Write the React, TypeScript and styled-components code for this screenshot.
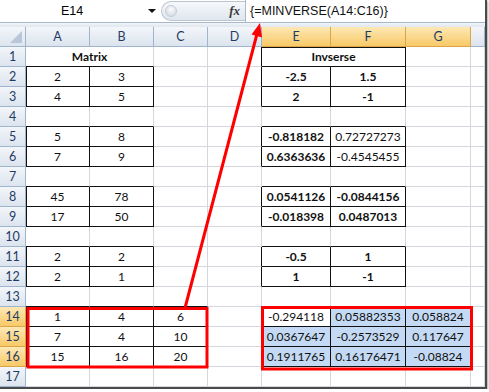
import React from 'react';
import styled, { createGlobalStyle } from 'styled-components';

const Global = createGlobalStyle`
  html, body { margin: 0; padding: 0; background: #fff; }
  body { font-family: Lato, "Liberation Sans", sans-serif; }
  * { box-sizing: border-box; }
`;

const COLS = ['A', 'B', 'C', 'D', 'E', 'F', 'G', 'H'];
const GRID = '#d4d8de';
const BLACK = '#111';

type CellData = { v: string; b?: boolean };

const DATA: Record<string, CellData> = {
  A2: { v: '2' }, B2: { v: '3' }, A3: { v: '4' }, B3: { v: '5' },
  A5: { v: '5' }, B5: { v: '8' }, A6: { v: '7' }, B6: { v: '9' },
  A8: { v: '45' }, B8: { v: '78' }, A9: { v: '17' }, B9: { v: '50' },
  A11: { v: '2' }, B11: { v: '2' }, A12: { v: '2' }, B12: { v: '1' },
  A14: { v: '1' }, B14: { v: '4' }, C14: { v: '6' },
  A15: { v: '7' }, B15: { v: '4' }, C15: { v: '10' },
  A16: { v: '15' }, B16: { v: '16' }, C16: { v: '20' },
  E2: { v: '-2.5', b: true }, F2: { v: '1.5', b: true },
  E3: { v: '2', b: true }, F3: { v: '-1', b: true },
  E5: { v: '-0.818182', b: true }, F5: { v: '0.72727273' },
  E6: { v: '0.6363636', b: true }, F6: { v: '-0.4545455' },
  E8: { v: '0.0541126', b: true }, F8: { v: '-0.0844156', b: true },
  E9: { v: '-0.018398', b: true }, F9: { v: '0.0487013', b: true },
  E11: { v: '-0.5', b: true }, F11: { v: '1', b: true },
  E12: { v: '1', b: true }, F12: { v: '-1', b: true },
  E14: { v: '-0.294118' }, F14: { v: '0.05882353' }, G14: { v: '0.058824' },
  E15: { v: '0.0367647' }, F15: { v: '-0.2573529' }, G15: { v: '0.117647' },
  E16: { v: '0.1911765' }, F16: { v: '0.16176471' }, G16: { v: '-0.08824' },
};

// boxed ranges: [c1, r1, c2, r2] (col index 0 = A)
const BOXES: [number, number, number, number][] = [
  [0, 2, 1, 3], [0, 5, 1, 6], [0, 8, 1, 9], [0, 11, 1, 12], [0, 14, 2, 16],
  [4, 1, 5, 3], [4, 5, 5, 6], [4, 8, 5, 9], [4, 11, 5, 12], [4, 14, 6, 16],
];

const boxed = (c: number, r: number) =>
  BOXES.some(([c1, r1, c2, r2]) => c >= c1 && c <= c2 && r >= r1 && r <= r2);

const inSel = (c: number, r: number) => c >= 4 && c <= 6 && r >= 14 && r <= 16;

const Frame = styled.div`
  position: relative;
  width: 487px;
  height: 389px;
  border-right: 2px solid #4a4a4a;
  border-bottom: 2px solid #4a4a4a;
  box-shadow: 1px 1px 2px rgba(0, 0, 0, 0.35);
  overflow: hidden;
  background: #fff;
`;

const FormulaBar = styled.div`
  display: flex;
  height: 23px;
  border-bottom: 1px solid #a9b8ca;
  background: #fff;
`;

const NameBox = styled.div`
  width: 161px;
  display: flex;
  align-items: center;
`;

const NameText = styled.span`
  flex: 1;
  text-align: center;
  font-family: "Liberation Sans", sans-serif;
  font-size: 12.5px;
  color: #000;
  padding-right: 4px;
`;

const DropArrow = styled.span`
  width: 0;
  height: 0;
  border-left: 4px solid transparent;
  border-right: 4px solid transparent;
  border-top: 4px solid #111;
  margin-right: 5px;
`;

const Pill = styled.div`
  width: 84px;
  margin: 1px 0;
  border: 1px solid #b9c5d3;
  border-right: none;
  border-radius: 11px 0 0 11px;
  background: linear-gradient(#f6f8fb, #dfe6ee);
  display: flex;
  align-items: center;
  justify-content: space-between;
  padding: 0 5px 0 3px;
`;

const Knob = styled.span`
  width: 12px;
  height: 12px;
  border-radius: 50%;
  border: 1px solid #c3ccd7;
  background: radial-gradient(circle at 50% 35%, #fbfcfd, #cbd3dd);
`;

const Fx = styled.span`
  font-family: "Liberation Serif", serif;
  font-style: italic;
  font-weight: bold;
  font-size: 13px;
  color: #3a3a3a;
`;

const FormulaInput = styled.div`
  flex: 1;
  border-left: 1px solid #a9b8ca;
  padding-left: 4px;
  display: flex;
  align-items: center;
  font-family: "Liberation Sans", sans-serif;
  font-size: 12.5px;
  color: #111;
`;

const Band = styled.div`
  height: 4px;
  background: linear-gradient(#f1f4f8, #e0e7ef);
`;

const Sheet = styled.div`
  display: grid;
  grid-template-columns: 26px 64px 64px 54px 54px 69px 75px 65px 1fr;
  grid-auto-rows: 20px;
`;

const Corner = styled.div`
  background: linear-gradient(#f3f6fa, #dce4ee);
  border-right: 1px solid #9fb5cd;
  border-bottom: 1px solid #9fb5cd;
  display: flex;
  align-items: flex-end;
  justify-content: flex-end;
  padding: 0 3px 3px 0;
`;

const CornerTriangle = styled.span`
  width: 0;
  height: 0;
  border-left: 12px solid transparent;
  border-bottom: 12px solid #b8c6d7;
`;

const HeaderCell = styled.div<{ $sel?: boolean }>`
  background: ${(p) =>
    p.$sel ? 'linear-gradient(#fde8b4, #f8c968)' : 'linear-gradient(#f3f6fa, #dce4ee)'};
  border-right: 1px solid ${(p) => (p.$sel ? '#dba548' : '#9fb5cd')};
  border-bottom: 1px solid ${(p) => (p.$sel ? '#dba548' : '#9fb5cd')};
  display: flex;
  align-items: center;
  justify-content: center;
  font-size: 12.5px;
  color: #1f3b63;
`;

const Cell = styled.div<{
  $rb: string;
  $bb: string;
  $lb?: boolean;
  $tb?: boolean;
  $fill?: string;
  $bold?: boolean;
  $span?: number;
}>`
  grid-column: span ${(p) => p.$span || 1};
  border-right: 1px solid ${(p) => p.$rb};
  border-bottom: 1px solid ${(p) => p.$bb};
  box-shadow: ${(p) =>
    [p.$lb ? `inset 1px 0 0 ${BLACK}` : '', p.$tb ? `inset 0 1px 0 ${BLACK}` : '']
      .filter(Boolean)
      .join(', ') || 'none'};
  background: ${(p) => p.$fill || '#fff'};
  display: flex;
  align-items: center;
  justify-content: center;
  font-size: 12px;
  font-weight: ${(p) => (p.$bold ? 700 : 400)};
  color: #111;
  white-space: nowrap;
  overflow: hidden;
`;

const Overlay = styled.svg`
  position: absolute;
  left: 0;
  top: 0;
  pointer-events: none;
`;

function renderRow(r: number) {
  const out: React.ReactNode[] = [];
  out.push(
    <HeaderCell key={`h${r}`} $sel={r >= 14 && r <= 16}>
      {r}
    </HeaderCell>
  );
  let c = 0;
  while (c < COLS.length) {
    const merged = r === 1 && (c === 0 || c === 4);
    const span = merged ? 2 : 1;
    const lastC = c + span - 1;
    const id = `${COLS[c]}${r}`;
    let content: CellData | undefined = DATA[id];
    if (r === 1 && c === 0) content = { v: 'Matrix', b: true };
    if (r === 1 && c === 4) content = { v: 'Invserse', b: true };
    const me = boxed(lastC, r);
    const rb = me || boxed(lastC + 1, r) ? BLACK : GRID;
    const bb = boxed(c, r) || boxed(c, r + 1) ? BLACK : GRID;
    const fill = inSel(c, r) && !(c === 4 && r === 14) ? '#c4d9f3' : undefined;
    out.push(
      <Cell
        key={id}
        $span={span}
        $rb={rb}
        $bb={bb}
        $lb={c === 0 && boxed(c, r)}
        $tb={r === 1 && boxed(c, r)}
        $fill={fill}
        $bold={content?.b}
      >
        {content?.v}
      </Cell>
    );
    c += span;
  }
  return out;
}

export default function App() {
  const rows = Array.from({ length: 17 }, (_, i) => i + 1);
  return (
    <>
      <Global />
      <Frame>
        <FormulaBar>
          <NameBox>
            <NameText>E14</NameText>
            <DropArrow />
          </NameBox>
          <Pill>
            <Knob />
            <Fx>fx</Fx>
          </Pill>
          <FormulaInput>{'{=MINVERSE(A14:C16)}'}</FormulaInput>
        </FormulaBar>
        <Band />
        <Sheet>
          <Corner>
            <CornerTriangle />
          </Corner>
          {COLS.map((col, i) => (
            <HeaderCell key={col} $sel={i >= 4 && i <= 6}>
              {col === 'H' ? '' : col}
            </HeaderCell>
          ))}
          {rows.map((r) => renderRow(r))}
        </Sheet>
        <Overlay width="489" height="392" viewBox="0 0 489 392">
          <rect x="28" y="308.5" width="179" height="58.5" fill="none" stroke="#f00" strokeWidth="3" />
          <rect x="262.5" y="307.5" width="209" height="61.5" fill="none" stroke="#f00" strokeWidth="3" />
          <line x1="185" y1="308" x2="256.7" y2="35" stroke="#f00" strokeWidth="3" />
          <polygon points="260,23 262,37.5 251.5,34.5" fill="#f00" />
        </Overlay>
      </Frame>
    </>
  );
}
